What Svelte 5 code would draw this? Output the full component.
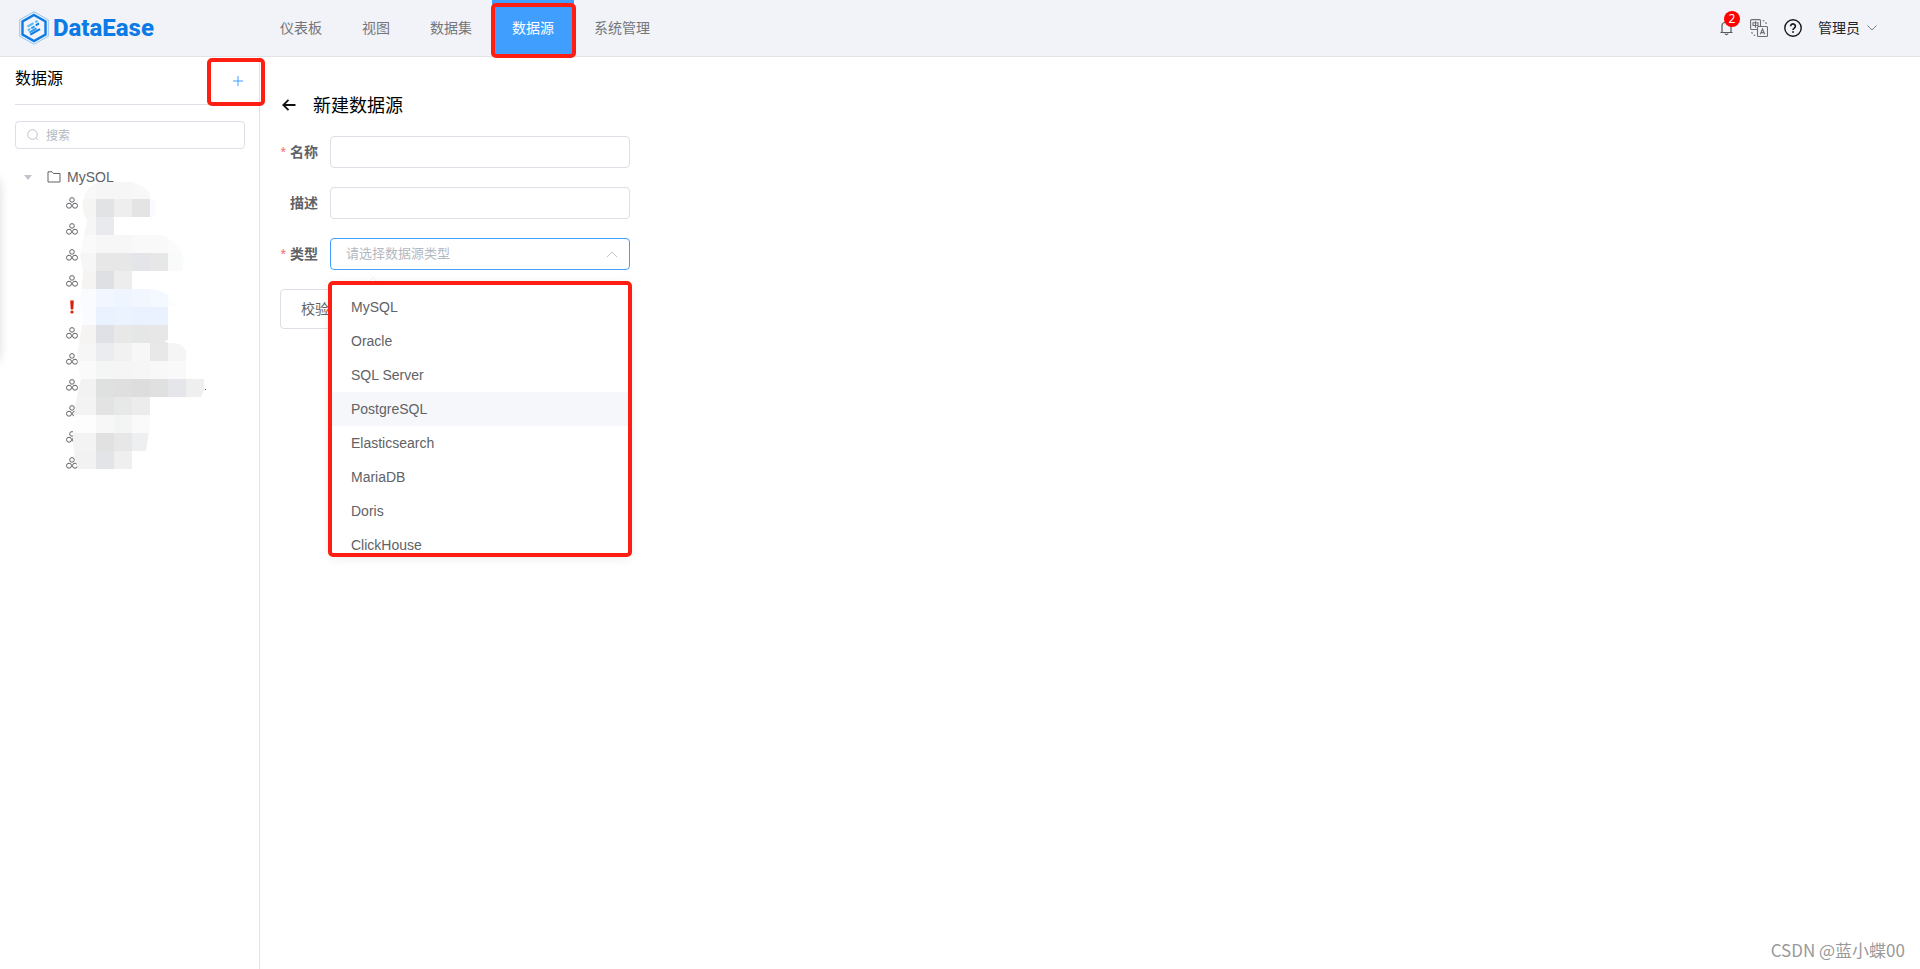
<script>
  const nav = ['仪表板', '视图', '数据集', '数据源', '系统管理'];
  const active = '数据源';
  const types = ['MySQL', 'Oracle', 'SQL Server', 'PostgreSQL', 'Elasticsearch', 'MariaDB', 'Doris', 'ClickHouse'];
  const hovered = 'PostgreSQL';
  const sources = ['ok', 'ok', 'ok', 'ok', 'error', 'ok', 'ok', 'ok', 'ok', 'ok', 'ok'];
  let type = $state('');

  // Colours of the masked names: 18px cells, first column starts left of the names
  const mask = [
    ['#f8f8f8', '#f6f6f6', '#f6f6f6', '#f8f8f8'],
    ['#f5f5f4', '#e2e3e5', '#eeeeee', '#e4e4e4', '#f9fbff'],
    ['#f6f6f6', '#e9eaed'],
    ['#fafafa', '#f7f7f7', '#f7f7f7', '#f9f9f9', '#f9f9f9', '#fbfbfb'],
    ['#f6f6f6', '#e7e7e7', '#e7e7e7', '#e3e5e8', '#e7e7e7', '#f9fafa'],
    ['#f5f4f3', '#dfe0e4', '#ededed'],
    ['#f9fbff', '#f1f6ff', '#eef5ff', '#f1f6ff', '#f4f8ff', '#fcfdff'],
    ['#f9fbff', '#ebf2ff', '#ebf3ff', '#ebf2ff', '#ebf2ff'],
    ['#f5f4f3', '#e0e1e6', '#e8e8e8', '#e5e7e7', '#e7e7e7'],
    ['#f6f6f6', '#ebecef', '#f1f1f1', '#f7f7f7', '#e8e8e8', '#f5f5f5'],
    ['#fafafa', '#f4f5f5', '#f5f5f5', '#f6f6f6', '#f8f8f8', '#f9f9f9'],
    ['#f2f2f2', '#dfe0e0', '#dfdfdf', '#dddddd', '#e0e0e0', '#e5e6e9', '#efefef'],
    ['#f3f3f3', '#e3e3e3', '#e7e9e9', '#ececec'],
    ['#fdfdfd', '#f7f7f7', '#f3f4f4', '#fafafa'],
    ['#f3f3f3', '#e1e1e1', '#e7e7e7', '#eeeff1'],
    ['#f2f2f2', '#e3e4e7', '#efefef']
  ];
</script>

<div class="app">
  <header>
    <a class="logo" href="#home" aria-label="DataEase">
      <svg width="30" height="34" viewBox="0 0 30 34" fill="none">
        <path d="M15 .7 29.3 8.8v16.4L15 33.3.7 25.2V8.8Z" stroke="#82b9ee" stroke-width=".8" />
        <path d="M15 4 26.500 10.500v13L15 30 3.500 23.500v-13Z" stroke="#0c7be6" stroke-width="2.400" />
        <g stroke-width="2">
          <path d="m8.500 15.700 6-3.500M16.300 11.200l2.200-1.300M8.800 19.300l2.400-1.400" stroke="#55baf5" />
          <path d="m16.800 14.300 3.200-1.900M11.300 23.700l9.700-5.600" stroke="#0c7be6" />
          <path d="m12.300 17.300 3.300-2M10.500 21.500l7-4.100" stroke="#2a96ee" />
        </g>
      </svg>
      <span>DataEase</span>
    </a>
    <nav>
      {#each nav as item}
        <a href="#{item}" class:active={item === active}>{item}</a>
      {/each}
    </nav>
    <div class="tools">
      <button class="bell" aria-label="2">
        <svg width="14" height="16" viewBox="0 0 14 16" fill="none" stroke="#55585e" stroke-width="1.200">
          <path d="M2 12.500V5.500a3 3 0 0 1 3-3h3a3 3 0 0 1 3 3v7M.5 12.500h12M4.800 13.500q1.700 2.200 3.400 0" />
        </svg>
        <span class="badge">2</span>
      </button>
      <button aria-label="中 A">
        <svg width="18" height="18" viewBox="0 0 18 18" fill="none" stroke="#6b6e74" stroke-width="1.100">
          <path d="M7.200 10.500H1.600a1 1 0 0 1-1-1V1.600a1 1 0 0 1 1-1h7.900a1 1 0 0 1 1 1v5.600" />
          <rect x="7.500" y="7.500" width="10" height="10" rx="1" />
          <path d="M3 3.800h5v2.700H3ZM5.500 2.200v6.500M10.300 15.300l2.200-5.300 2.200 5.300M11.100 13.600h2.900" />
          <path d="m12.800 1.400 1.500.6M15.600 3.200l.7 1.800M5.200 16.600l-1.500-.6M2.400 14.800l-.7-1.800" />
        </svg>
      </button>
      <button aria-label="?">
        <svg width="18" height="18" viewBox="0 0 18 18" fill="none" stroke="#17191c" stroke-width="1.400">
          <circle cx="9" cy="9" r="8.200" />
          <path d="M6.600 7.200a2.400 2.300 0 1 1 3.700 1.900C9.400 9.700 9 10 9 11" stroke-width="1.700" />
          <path d="M9 12.200v1.600" stroke-width="1.800" />
        </svg>
      </button>
      <button class="user">
        管理员
        <svg width="10" height="6" viewBox="0 0 10 6" fill="none" stroke="#7a7d83"><path d="m.5.5 4.500 4.500L9.500.5" /></svg>
      </button>
    </div>
  </header>

  <div class="body">
    <aside>
      <div class="side-head">
        <h2>数据源</h2>
        <button class="add" aria-label="+">
          <svg width="10" height="10" viewBox="0 0 10 10" stroke="#409eff"><path d="M0 5h10M5 0v10" /></svg>
        </button>
      </div>
      <label class="search">
        <svg width="12" height="12" viewBox="0 0 12 12" fill="none" stroke="#c0c4cc"><circle cx="5.500" cy="5.500" r="4.800" /><path d="m9 9 2 2" /></svg>
        <input type="text" placeholder="搜索" />
      </label>
      <div class="tree">
        <div class="folder">
          <svg width="8" height="5" viewBox="0 0 8 5" fill="#c0c4cc"><path d="M0 0h8L4 5Z" /></svg>
          <svg width="14" height="12" viewBox="0 0 14 12" fill="none" stroke="#606266"><path d="M1 11V.8h4l1.500 1.700H13V11Z" /></svg>
          <span>MySQL</span>
        </div>
        <ul>
          {#each sources as state}
            <li>
              {#if state === 'ok'}
                <svg width="12" height="12" viewBox="0 0 12 12" fill="none" stroke="#606266">
                  <circle cx="6" cy="2.900" r="2.300" /><circle cx="3" cy="8.700" r="2.500" /><circle cx="9" cy="8.700" r="2.500" />
                </svg>
              {:else}
                <svg width="12" height="14" viewBox="0 0 12 14" fill="#d81e06"><path d="M4.200.5h3.600L7.200 9.500H4.800Z" /><circle cx="6" cy="12" r="1.600" /></svg>
              {/if}
            </li>
          {/each}
        </ul>
        <svg class="mask" width="140" height="290" viewBox="72 181 140 290" shape-rendering="crispEdges">
          <clipPath id="blob">
            <path d="M100 182H130Q142 184 150 193V198H155V217H114V235H160Q176 239 184 257L182 271H132V289H152Q170 292 177 305L168 308V340L164 341L168 343H176Q183 345 186 351V379H204V390L201 397H150V425L146 451H132V469H78Q72 450 73 430Q73 410 81 379Q76 360 78 350L82 325L83 321L80 305L83 271L80 255L84 235L87 220Q81 212 83 200Q87 185 100 182Z" />
          </clipPath>
          <g clip-path="url(#blob)">
            {#each mask as row, r}
              {#each row as fill, c}
                <rect x={c ? 78 + c * 18 : 72} y={181 + r * 18} width={c ? 18 : 24} height="18" {fill} />
              {/each}
            {/each}
          </g>
          <rect x="205" y="389" width="1" height="1" fill="#606266" />
        </svg>
      </div>
    </aside>

    <main>
      <div class="title">
        <button aria-label="←">
          <svg width="14" height="12" viewBox="0 0 14 12" fill="none" stroke="#111" stroke-width="1.800"><path d="M13.500 6H1.500M6.500.8 1.300 6l5.200 5.200" /></svg>
        </button>
        <h1>新建数据源</h1>
      </div>
      <form>
        <div class="field required">
          <label for="name">名称</label>
          <input id="name" type="text" />
        </div>
        <div class="field">
          <label for="desc">描述</label>
          <input id="desc" type="text" />
        </div>
        <div class="field required">
          <label for="type">类型</label>
          <div class="picker">
            <select id="type" bind:value={type} class:empty={!type}>
              <option value="">请选择数据源类型</option>
              {#each types as t}<option value={t}>{t}</option>{/each}
            </select>
            <svg class="caret" width="12" height="7" viewBox="0 0 12 7" fill="none" stroke="#c0c4cc"><path d="m.8 6.200 5.200-5.200 5.200 5.200" /></svg>
            <div class="popup">
              <ul>
                {#each types as t}
                  <li><button type="button" class:hovered={t === hovered} onclick={() => (type = t)}>{t}</button></li>
                {/each}
              </ul>
            </div>
          </div>
        </div>
        <button class="check" type="button">校验</button>
      </form>
    </main>
  </div>
  <div class="edge"></div>
  <div class="watermark">CSDN @蓝小蝶00</div>
</div>

<style>
  :global(body) { background: #fff; }
  .app {
    position: relative;
    display: flex;
    flex-direction: column;
    min-height: 100vh;
    overflow: hidden;
    font: 14px/20px "Liberation Sans", "Noto Sans CJK SC", sans-serif;
    color: #606266;
  }
  .app :is(*, *::before, *::after) { box-sizing: border-box; }
  button, input, select { font: inherit; color: inherit; }
  button { padding: 0; border: 0; background: none; cursor: pointer; }
  svg { display: block; flex: none; }
  h1, h2, ul { margin: 0; padding: 0; font-weight: 400; list-style: none; }

  header {
    display: flex;
    height: 57px;
    background: #f1f3f8;
    border-bottom: 1px solid #e2e3e6;
  }
  .logo {
    display: flex;
    align-items: center;
    gap: 4px;
    width: 260px;
    padding-left: 19px;
    color: #0c7be6;
    text-decoration: none;
    font: 800 24px/30px Roboto, sans-serif;
  }
  nav { display: flex; }
  nav a {
    position: relative;
    padding: 0 20px;
    line-height: 56px;
    color: #74767b;
    text-decoration: none;
  }
  nav .active { background: #409eff; color: #fff; }
  nav .active::after, .add::after, .popup::after {
    content: "";
    position: absolute;
    inset: 3px -2px -2px -1px;
    border: 4px solid #ff1f12;
    border-radius: 5px;
    pointer-events: none;
  }
  .tools {
    display: flex;
    align-items: center;
    gap: 16px;
    margin-left: auto;
    padding-right: 43px;
  }
  .bell { position: relative; }
  .badge {
    position: absolute;
    top: -9px;
    left: 4px;
    width: 16px;
    border-radius: 8px;
    background: #f00;
    color: #fff;
    font: 12px/16px "Noto Sans", sans-serif;
  }
  .user { display: flex; align-items: center; gap: 7px; color: #22252a; }

  .body { display: flex; flex: 1; }
  aside {
    width: 260px;
    padding: 0 14px 0 15px;
    border-right: 1px solid #e2e3e6;
  }
  .side-head {
    display: flex;
    align-items: center;
    justify-content: space-between;
    height: 48px;
    border-bottom: 1px solid #dcdfe6;
  }
  h2 { padding-bottom: 4px; color: #000; font-size: 16px; line-height: 24px; }
  .add { position: relative; padding: 19px 2px; }
  .add::after { inset: 1px -20px -1px -24px; }
  .search {
    display: flex;
    align-items: center;
    gap: 7px;
    height: 28px;
    margin-top: 16px;
    padding: 0 11px;
    border: 1px solid #dcdfe6;
    border-radius: 4px;
    font-size: 12px;
  }
  .search input { flex: 1; min-width: 0; padding: 1px 0 0; border: 0; outline: 0; }
  input::placeholder { color: #b4b8c1; opacity: 1; }
  .tree { position: relative; margin-top: 15px; }
  .folder { display: flex; align-items: center; height: 26px; padding-left: 9px; }
  .folder svg + svg { margin-left: 15px; }
  .folder span { margin-left: 6px; }
  .tree li { display: flex; align-items: center; height: 26px; padding-left: 51px; }
  .mask { position: absolute; top: 17px; left: 57px; }

  main { flex: 1; padding: 36px 20px; }
  .title { display: flex; align-items: center; gap: 17px; height: 24px; padding-left: 2px; }
  h1 { padding-top: 2px; color: #000; font-size: 18px; line-height: 24px; }
  form { margin-top: 19px; }
  .field { display: flex; width: 350px; margin-bottom: 19px; }
  .field label {
    width: 50px;
    padding-right: 12px;
    text-align: right;
    font-weight: 700;
    line-height: 32px;
  }
  .required label::before { content: "*"; margin-right: 4px; color: #f56c6c; font-weight: 400; }
  .field input, select {
    flex: 1;
    width: 100%;
    min-width: 0;
    height: 32px;
    padding: 0 15px;
    border: 1px solid #dcdfe6;
    border-radius: 4px;
    background: #fff;
    outline: 0;
  }
  .picker { position: relative; flex: 1; }
  select { display: block; appearance: none; border-color: #409eff; font-size: 13px; }
  .empty { color: #b4b8c1; }
  .caret { position: absolute; top: 13px; right: 12px; pointer-events: none; }
  .popup {
    position: absolute;
    z-index: 1;
    top: 45px;
    left: 0;
    right: 0;
    border-radius: 4px;
    background: #fff;
    box-shadow: 0 2px 12px rgba(0, 0, 0, 0.1);
  }
  .popup::before {
    content: "";
    position: absolute;
    top: -4px;
    left: 38px;
    width: 8px;
    height: 8px;
    border: 1px solid #ebeef5;
    background: #fff;
    transform: rotate(45deg);
  }
  .popup::after { inset: -2px; }
  .popup ul { position: relative; height: 272px; padding-top: 7px; overflow: hidden; background: #fff; border-radius: 4px; }
  .popup button { display: block; width: 100%; height: 34px; padding: 0 21px; text-align: left; }
  .popup .hovered { background: #f5f7fa; }
  .check {
    width: 70px;
    height: 40px;
    border: 1px solid #dcdfe6;
    border-radius: 4px;
  }
  .edge {
    position: absolute;
    top: 180px;
    left: -20px;
    width: 18px;
    height: 180px;
    box-shadow: 0 0 12px rgba(0, 0, 0, 0.2);
  }
  .watermark {
    position: absolute;
    right: 15px;
    bottom: 8px;
    color: #999;
    font: 17px/22px "Noto Sans CJK SC", sans-serif;
  }
</style>
